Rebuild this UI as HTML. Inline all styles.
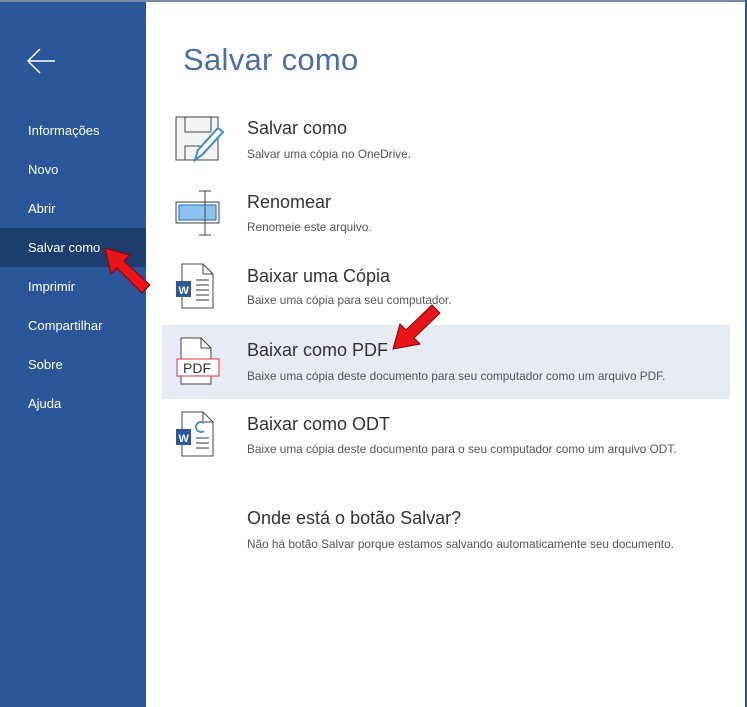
<!DOCTYPE html>
<html><head><meta charset="utf-8"><style>
*{margin:0;padding:0;box-sizing:border-box}
body{width:747px;height:707px;overflow:hidden;background:#fff;font-family:"Segoe UI","Liberation Sans",sans-serif;position:relative}
.top{position:absolute;left:0;top:0;width:747px;height:2px;background:#7b8aa8}
.rb{position:absolute;right:0;top:0;width:2px;height:707px;background:#2b579a}
.side{position:absolute;left:0;top:2px;width:146px;height:705px;background:#2b579a}
.nav{position:absolute;left:28px;color:#fff;font-size:13px}
.sel{position:absolute;left:0;top:228px;width:146px;height:39px;background:#1e3e6f}
h1{position:absolute;left:183px;top:42px;font-weight:300;font-size:31px;color:#4a6fa8;font-family:"Liberation Sans",sans-serif;letter-spacing:0.3px}
.t{position:absolute;left:247px;font-size:18px;color:#333}
.s{position:absolute;left:247px;font-size:11.8px;color:#555}
.hl{position:absolute;left:162px;top:325px;width:568px;height:74px;background:#e6ebf4}
svg{position:absolute}
</style></head><body>
<div class="top"></div><div class="rb"></div>
<div class="side"></div>
<div class="sel"></div>
<svg style="left:26px;top:48px" width="32" height="28" viewBox="0 0 32 28"><path d="M29 13H3M14 1L2 13l12 12" stroke="#fff" stroke-width="1.5" fill="none"/></svg>
<div class="nav" style="top:123px">Informações</div>
<div class="nav" style="top:162px">Novo</div>
<div class="nav" style="top:201px">Abrir</div>
<div class="nav" style="top:240px">Salvar como</div>
<div class="nav" style="top:279px">Imprimir</div>
<div class="nav" style="top:318px">Compartilhar</div>
<div class="nav" style="top:357px">Sobre</div>
<div class="nav" style="top:396px">Ajuda</div>
<svg style="left:100px;top:243px" width="52" height="52" viewBox="0 0 52 52"><path d="M5 5L30 12L24 18L50 42L42 50L17 25L11 31Z" fill="#e8141a" stroke="#8a0000" stroke-width="1"/></svg>
<h1>Salvar como</h1>
<div class="hl"></div>
<svg style="left:175px;top:116px" width="50" height="48" viewBox="0 0 50 48"><path d="M1 1H43V44H1V39Z" fill="#f4f4f4" stroke="#444"/><path d="M10 1V16H36V1M10 44V30H26" fill="none" stroke="#444"/><path d="M20 44l3-10 20-22 5 4-20 22z" fill="#fff" stroke="#3b8bd0" stroke-width="2"/></svg>
<svg style="left:175px;top:190px" width="48" height="46" viewBox="0 0 48 46"><rect x="1" y="12" width="43" height="21" fill="#f4f4f4" stroke="#444"/><rect x="4" y="15" width="37" height="15" fill="#8ec2ee" stroke="#2a6cc0"/><path d="M24 1h12M30 1v44M24 45h12" stroke="#444" fill="none"/></svg>
<svg style="left:175px;top:263px" width="40" height="46" viewBox="0 0 40 46"><path d="M7 1H28L38 11V45H7Z" fill="#fff" stroke="#444"/><path d="M28 1V11H38" fill="none" stroke="#444"/><path d="M21 17h13M21 22h13M21 27h13M21 32h13M21 37h13" stroke="#999" stroke-width="2"/><rect x="1" y="18" width="15" height="16" fill="#2b579a"/><text x="3.5" y="31" font-size="11" font-weight="bold" fill="#fff" font-family="Liberation Sans">W</text></svg>
<svg style="left:175px;top:337px" width="46" height="48" viewBox="0 0 46 48"><path d="M6 1H26L36 11V47H6Z" fill="#fff" stroke="#444"/><path d="M26 1V11H36" fill="none" stroke="#444"/><rect x="2" y="22" width="42" height="17" fill="#fff" stroke="#e03030"/><text x="8" y="36" font-size="14" fill="#333" font-family="Liberation Sans">PDF</text></svg>
<svg style="left:175px;top:411px" width="40" height="46" viewBox="0 0 40 46"><path d="M7 1H28L38 11V45H7Z" fill="#fff" stroke="#444"/><path d="M28 1V11H38" fill="none" stroke="#444"/><path d="M21 27h13M21 32h13M21 37h13" stroke="#999" stroke-width="2"/><path d="M29 12a5 5 0 1 0 0 8" stroke="#4a90d0" stroke-width="2" fill="none"/><rect x="1" y="18" width="15" height="16" fill="#2b579a"/><text x="3.5" y="31" font-size="11" font-weight="bold" fill="#fff" font-family="Liberation Sans">W</text></svg>
<div class="t" style="top:118px">Salvar como</div>
<div class="s" style="top:147px">Salvar uma cópia no OneDrive.</div>
<div class="t" style="top:192px">Renomear</div>
<div class="s" style="top:220px">Renomeie este arquivo.</div>
<div class="t" style="top:266px">Baixar uma Cópia</div>
<div class="s" style="top:293px">Baixe uma cópia para seu computador.</div>
<div class="t" style="top:340px">Baixar como PDF</div>
<div class="s" style="top:369px">Baixe uma cópia deste documento para seu computador como um arquivo PDF.</div>
<div class="t" style="top:414px">Baixar como ODT</div>
<div class="s" style="top:442px">Baixe uma cópia deste documento para o seu computador como um arquivo ODT.</div>
<div class="t" style="top:508px">Onde está o botão Salvar?</div>
<div class="s" style="top:537px">Não há botão Salvar porque estamos salvando automaticamente seu documento.</div>
<svg style="left:390px;top:302px" width="52" height="52" viewBox="0 0 52 52"><path d="M3 47L10 22L16 28L42 3L50 11L24 36L30 42Z" fill="#e8141a" stroke="#8a0000" stroke-width="1"/></svg>
</body></html>
